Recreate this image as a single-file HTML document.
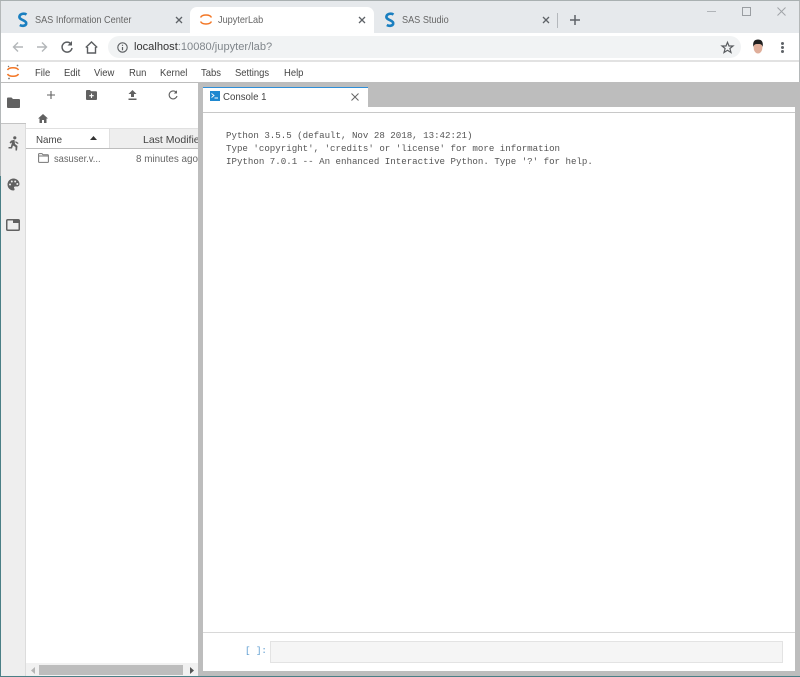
<!DOCTYPE html>
<html><head><meta charset="utf-8">
<style>
html,body{margin:0;padding:0;background:#fff}
body{width:800px;height:677px;position:relative;overflow:hidden;font-family:"Liberation Sans",sans-serif;font-size:11px;color:#333}
#w{position:absolute;left:0;top:0;width:800px;height:677px;filter:blur(.3px)}
.a{position:absolute}
.t{position:absolute;white-space:nowrap;line-height:14px;transform-origin:0 50%}
svg{position:absolute;overflow:visible}
.m{position:absolute;top:66px;font-size:10.500px;line-height:14px;color:#444;white-space:nowrap;transform:scaleX(.9);transform-origin:0 50%}
.c{position:absolute;left:226px;font-family:"Liberation Mono",monospace;font-size:9.150px;line-height:13px;color:#555;white-space:pre}
.tb{font-size:10.500px;color:#666;transform:scaleX(.87)}
</style></head><body><div id="w">
<!-- chrome frame -->
<div class="a" style="left:0;top:0;width:800px;height:33px;background:#e6e9ec"></div>
<div class="a" style="left:0;top:0;width:800px;height:1px;background:#a9b0b1"></div>
<!-- active tab -->
<div class="a" style="left:190px;top:7px;width:184px;height:26px;background:#fff;border-radius:7px 7px 0 0"></div>
<!-- tab 1 -->
<svg style="left:17px;top:13px" width="12" height="14" viewBox="0 0 12 14"><path d="M9.500 1.600C7 -.2 2.800 .8 2.400 3.600C2.200 5.400 4 6.300 6 7.200C8 8.100 9.600 9 9.200 10.800C8.800 12.800 5.400 13.400 2.800 12" fill="none" stroke="#1a7fc0" stroke-width="2.600"/></svg>
<div class="t tb" style="left:35px;top:13px">SAS Information Center</div>
<svg style="left:175px;top:16px" width="8" height="8"><path d="M1 1L7 7M7 1L1 7" stroke="#5f6368" stroke-width="1.300"/></svg>
<!-- tab 2 -->
<svg style="left:200px;top:13px" width="12" height="13" viewBox="0 0 12 13"><path d="M.6 4.500C2 1.200 10 1.200 11.400 4.500M.6 8.500C2 11.800 10 11.800 11.400 8.500" fill="none" stroke="#f37726" stroke-width="1.500"/></svg>
<div class="t tb" style="left:218px;top:13px">JupyterLab</div>
<svg style="left:358px;top:16px" width="8" height="8"><path d="M1 1L7 7M7 1L1 7" stroke="#5f6368" stroke-width="1.300"/></svg>
<!-- tab 3 -->
<svg style="left:384px;top:13px" width="12" height="14" viewBox="0 0 12 14"><path d="M9.500 1.600C7 -.2 2.800 .8 2.400 3.600C2.200 5.400 4 6.300 6 7.200C8 8.100 9.600 9 9.200 10.800C8.800 12.800 5.400 13.400 2.800 12" fill="none" stroke="#1a7fc0" stroke-width="2.600"/></svg>
<div class="t tb" style="left:402px;top:13px">SAS Studio</div>
<svg style="left:542px;top:16px" width="8" height="8"><path d="M1 1L7 7M7 1L1 7" stroke="#5f6368" stroke-width="1.300"/></svg>
<div class="a" style="left:557px;top:13px;width:1px;height:15px;background:#b4b8bc"></div>
<svg style="left:570px;top:15px" width="10" height="10"><path d="M5 0V10M0 5H10" stroke="#5f6368" stroke-width="1.500"/></svg>
<!-- window controls -->
<div class="a" style="left:707px;top:11px;width:9px;height:1px;background:#b0b4b8"></div>
<div class="a" style="left:742px;top:7px;width:7px;height:7px;border:1px solid #9a9ea2"></div>
<svg style="left:777px;top:7px" width="10" height="10"><path d="M.5 .5L8.500 8.500M8.500 .5L.5 8.500" stroke="#a0a4a8" stroke-width="1"/></svg>
<!-- toolbar -->
<svg style="left:12px;top:41px" width="12" height="12"><path d="M11 6H1.500M6 1.500L1.500 6L6 10.500" fill="none" stroke="#b3b6b9" stroke-width="1.400"/></svg>
<svg style="left:36px;top:41px" width="12" height="12"><path d="M1 6H10.500M6 1.500L10.500 6L6 10.500" fill="none" stroke="#b3b6b9" stroke-width="1.400"/></svg>
<svg style="left:61px;top:41px" width="12" height="12"><path d="M10 3A5 5 0 1 0 11 7" fill="none" stroke="#5a5d60" stroke-width="1.500"/><path d="M11 0V4.500H6.500Z" fill="#5a5d60"/></svg>
<svg style="left:85px;top:41px" width="13" height="13"><path d="M.8 6.500L6.500 1L12.200 6.500M2.500 6V12H10.500V6" fill="none" stroke="#5a5d60" stroke-width="1.400"/></svg>
<div class="a" style="left:108px;top:36px;width:633px;height:22px;border-radius:11px;background:#f1f3f4"></div>
<svg style="left:117px;top:42px" width="11" height="11"><circle cx="5.500" cy="5.500" r="4.700" fill="none" stroke="#5a5d60" stroke-width="1.100"/><path d="M5.500 5V8.300M5.500 2.700V3.900" stroke="#5a5d60" stroke-width="1.200"/></svg>
<div class="t" style="left:134px;top:40px;font-size:11.100px;color:#333">localhost<span style="color:#80868b">:10080/jupyter/lab?</span></div>
<svg style="left:721px;top:41px" width="13" height="13" viewBox="0 0 13 13"><path d="M6.500 1.300L8 5H12L8.900 7.500L10 11.500L6.500 9.300L3 11.500L4.100 7.500L1 5H5Z" fill="none" stroke="#5a5d60" stroke-width="1.200"/></svg>
<!-- avatar -->
<svg style="left:751px;top:39px" width="14" height="16" viewBox="0 0 14 16"><ellipse cx="7" cy="8.500" rx="4.400" ry="6" fill="#dfae9a"/><path d="M2.300 8C1.500 2 4 .5 7 .5C10 .5 12.500 2 11.700 8C11 5 9 5 7 5C5 5 3 5 2.300 8Z" fill="#1f1f1f"/></svg>
<div class="a" style="left:781px;top:42px;width:3px;height:3px;background:#5f6368;border-radius:50%"></div>
<div class="a" style="left:781px;top:46px;width:3px;height:3px;background:#5f6368;border-radius:50%"></div>
<div class="a" style="left:781px;top:50px;width:3px;height:3px;background:#5f6368;border-radius:50%"></div>
<div class="a" style="left:0;top:60px;width:800px;height:2px;background:#e2e2e2"></div>
<!-- menu -->
<svg style="left:6px;top:63px" width="14" height="18" viewBox="0 0 14 18"><path d="M1.500 7C3 4 11 4 12.500 7M1.500 11C3 14 11 14 12.500 11" fill="none" stroke="#f37726" stroke-width="1.500"/><circle cx="11.500" cy="2.500" r=".9" fill="#777"/><circle cx="2.500" cy="3.500" r=".7" fill="#777"/><circle cx="3" cy="15.500" r=".9" fill="#777"/></svg>
<div class="m" style="left:35px">File</div>
<div class="m" style="left:64px">Edit</div>
<div class="m" style="left:94px">View</div>
<div class="m" style="left:129px">Run</div>
<div class="m" style="left:160px">Kernel</div>
<div class="m" style="left:201px">Tabs</div>
<div class="m" style="left:235px">Settings</div>
<div class="m" style="left:284px">Help</div>
<div class="a" style="left:0;top:82px;width:198px;height:1px;background:#bdbdbd"></div>
<!-- left tab bar -->
<div class="a" style="left:1px;top:83px;width:25px;height:593px;background:#eeeeee"></div>
<div class="a" style="left:1px;top:83px;width:25px;height:40px;background:#fff"></div>
<div class="a" style="left:1px;top:123px;width:25px;height:1px;background:#c4c4c4"></div>
<div class="a" style="left:25px;top:124px;width:1px;height:552px;background:#dcdcdc"></div>
<svg style="left:7px;top:97px" width="13" height="11"><path d="M0 1.500Q0 .5 1 .5H4.500L6 2H12Q13 2 13 3V10Q13 11 12 11H1Q0 11 0 10Z" fill="#616161"/></svg>
<svg style="left:8px;top:136px" width="11" height="15" viewBox="0 0 11 15"><circle cx="6.800" cy="1.800" r="1.600" fill="#616161"/><path d="M3 4.600L6.500 3.800L7 8L9.500 10L9 14.500H7.500L7.500 11L5 9.500L4 12.500L.5 12.500V11L2.800 11L4 6.500L2.500 7.500L1.500 6.800ZM7.500 5L10.500 7L10 8L7.500 6.800Z" fill="#616161"/></svg>
<svg style="left:7px;top:178px" width="13" height="13" viewBox="0 0 13 13"><path d="M6.500 0.500A6 6 0 1 0 6.500 12.500C7.800 12.500 7.800 11 7.200 10.300C6.600 9.400 7.300 8.500 8.300 8.500H10.200C11.700 8.500 12.500 7.300 12.500 6C12.500 3 9.800 .5 6.500 .5Z" fill="#616161"/><circle cx="3" cy="6.500" r="1" fill="#eee"/><circle cx="4.800" cy="3.500" r="1" fill="#eee"/><circle cx="8.200" cy="3.500" r="1" fill="#eee"/><circle cx="10.300" cy="6" r="1" fill="#eee"/></svg>
<svg style="left:6px;top:219px" width="14" height="12"><rect x=".75" y=".75" width="12.500" height="10.500" rx="1" fill="none" stroke="#616161" stroke-width="1.500"/><rect x="7" y="1" width="6" height="3" fill="#616161"/></svg>
<!-- file panel -->
<svg style="left:47px;top:91px" width="8" height="8"><path d="M4 0V8M0 4H8" stroke="#616161" stroke-width="1.100"/></svg>
<svg style="left:86px;top:90px" width="11" height="10"><path d="M0 1Q0 0 1 0H4L5 1.300H10Q11 1.300 11 2.300V9Q11 10 10 10H1Q0 10 0 9Z" fill="#616161"/><path d="M5.500 3.500V8M3.300 5.700H7.700" stroke="#fff" stroke-width="1.100"/></svg>
<svg style="left:128px;top:90px" width="9" height="10"><path d="M4.500 0L8.500 4H6V7H3V4H.5ZM.5 8.500H8.500V10H.5Z" fill="#616161"/></svg>
<svg style="left:168px;top:90px" width="10" height="10"><path d="M8.200 2.300A4 4 0 1 0 9 6" fill="none" stroke="#616161" stroke-width="1.100"/><path d="M9 .3V3.500H5.800Z" fill="#616161"/></svg>
<svg style="left:38px;top:114px" width="10" height="9"><path d="M5 0L10 4.500H8.500V9H6V6H4V9H1.500V4.500H0Z" fill="#616161"/></svg>
<div class="a" style="left:26px;top:128px;width:172px;height:1px;background:#e0e0e0"></div>
<div class="a" style="left:109px;top:129px;width:89px;height:19px;background:#eeeeee;border-left:1px solid #e0e0e0;box-sizing:border-box"></div>
<div class="a" style="left:26px;top:148px;width:172px;height:1px;background:#bdbdbd"></div>
<div class="t" style="left:36px;top:133px;font-size:10.500px;color:#444;transform:scaleX(.93)">Name</div>
<svg style="left:90px;top:136px" width="7" height="4"><path d="M3.500 0L7 4H0Z" fill="#333"/></svg>
<div class="a" style="left:110px;top:129px;width:88px;height:19px;overflow:hidden"><div class="t" style="left:33px;top:4px;font-size:10.500px;color:#444">Last Modified</div></div>
<svg style="left:38px;top:153px" width="11" height="10"><path d="M.6 1.200Q.6 .6 1.200 .6H4L5 1.800H9.800Q10.400 1.800 10.400 2.400V8.800Q10.400 9.400 9.800 9.400H1.200Q.6 9.400 .6 8.800ZM.6 3H10.400" fill="none" stroke="#757575" stroke-width="1"/></svg>
<div class="t" style="left:54px;top:152px;font-size:10.500px;color:#666;transform:scaleX(.89)">sasuser.v...</div>
<div class="a" style="left:110px;top:150px;width:88px;height:18px;overflow:hidden"><div class="t" style="left:26px;top:2px;font-size:10.500px;color:#666;transform:scaleX(.94)">8 minutes ago</div></div>
<!-- file scrollbar -->
<div class="a" style="left:26px;top:663px;width:172px;height:13px;background:#f1f1f1"></div>
<div class="a" style="left:39px;top:665px;width:144px;height:10px;background:#bdbdbd"></div>
<svg style="left:31px;top:667px" width="4" height="7"><path d="M4 0V7L0 3.500Z" fill="#b5b5b5"/></svg>
<svg style="left:190px;top:667px" width="4" height="7"><path d="M0 0V7L4 3.500Z" fill="#555"/></svg>
<!-- dock -->
<div class="a" style="left:198px;top:82px;width:602px;height:594px;background:#bdbdbd"></div>
<div class="a" style="left:203px;top:107px;width:592px;height:564px;background:#fff"></div>
<div class="a" style="left:203px;top:112px;width:592px;height:1px;background:#c8c8c8"></div>
<div class="a" style="left:203px;top:87px;width:165px;height:20px;background:#fff;border-top:1px solid #2f8fd8;box-sizing:border-box"></div>
<svg style="left:210px;top:91px" width="10" height="10"><rect width="10" height="10" fill="#1f88d0"/><path d="M1.500 2.500L4 4.500L1.500 6.500M4.500 7H8" fill="none" stroke="#fff" stroke-width=".9"/></svg>
<div class="t" style="left:223px;top:90px;font-size:10.500px;color:#444;transform:scaleX(.92)">Console 1</div>
<svg style="left:351px;top:93px" width="8" height="8"><path d="M.5 .5L7.500 7.500M7.500 .5L.5 7.500" stroke="#666" stroke-width="1"/></svg>
<!-- console -->
<div class="c" style="top:129px">Python 3.5.5 (default, Nov 28 2018, 13:42:21)</div>
<div class="c" style="top:142px">Type 'copyright', 'credits' or 'license' for more information</div>
<div class="c" style="top:155px">IPython 7.0.1 -- An enhanced Interactive Python. Type '?' for help.</div>
<div class="a" style="left:203px;top:632px;width:592px;height:1px;background:#d8d8d8"></div>
<div class="t" style="left:245px;top:644px;font-family:'Liberation Mono',monospace;font-size:9.150px;color:#5a9bd0">[ ]:</div>
<div class="a" style="left:270px;top:641px;width:513px;height:22px;background:#f5f5f5;border:1px solid #e3e3e3;box-sizing:border-box"></div>
<!-- window edges -->
<div class="a" style="left:0;top:676px;width:800px;height:1px;background:#4a7f86"></div>
<div class="a" style="left:0;top:1px;width:1px;height:175px;background:#b4b8b9"></div>
<div class="a" style="left:0;top:176px;width:1px;height:501px;background:#4a7f86"></div>
<div class="a" style="left:799px;top:1px;width:1px;height:81px;background:#b4b8b9"></div>
</div></body></html>
